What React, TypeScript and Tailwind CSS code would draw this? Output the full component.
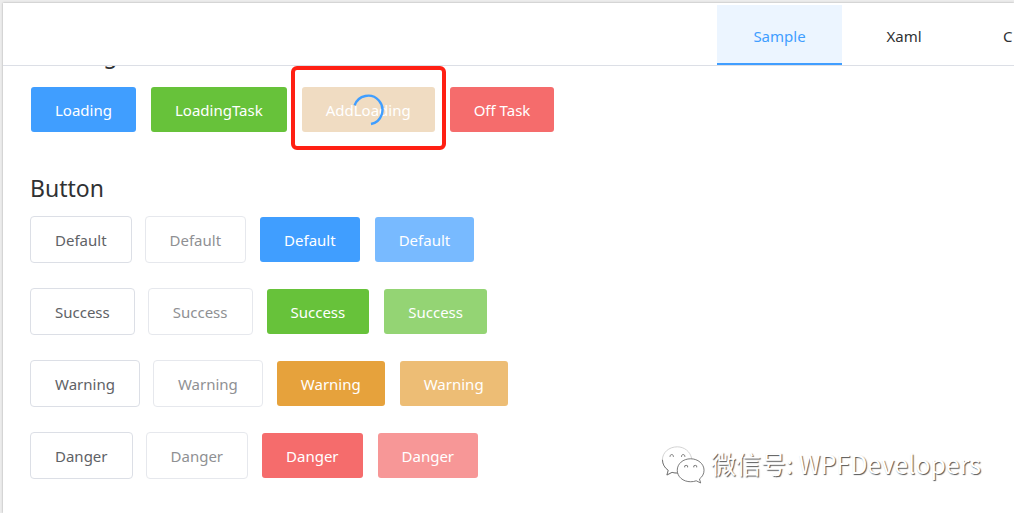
import clsx from "clsx";

type Tone = "primary" | "success" | "warning" | "danger";

const solid: Record<Tone, string> = {
    primary: "bg-[#409eff]",
    success: "bg-[#67c23a]",
    warning: "bg-[#e6a23c]",
    danger: "bg-[#f56c6c]",
};

const rows: { label: string; tone: Tone }[] = [
    { label: "Default", tone: "primary" },
    { label: "Success", tone: "success" },
    { label: "Warning", tone: "warning" },
    { label: "Danger", tone: "danger" },
];

function Button({ label, tone, disabled }: { label: string; tone?: Tone; disabled?: boolean }) {
    return (
        <button
            type="button"
            disabled={disabled}
            className={clsx(
                "h-[47px] rounded border px-6 text-[15px] leading-5 whitespace-nowrap",
                tone ? ["border-transparent bg-clip-padding text-white", solid[tone]] : "border-[#dcdfe6] bg-white text-[#606266]",
                disabled && "opacity-70"
            )}
        >
            {label}
        </button>
    );
}

function LoadingButton({ label }: { label: string }) {
    return (
        <div className="relative">
            <button
                type="button"
                disabled
                className="h-[47px] rounded border border-transparent bg-[#f0dcc2] bg-clip-padding px-6 text-[15px] leading-5 whitespace-nowrap text-white"
            >
                {label}
            </button>
            <svg className="absolute inset-0 m-auto size-8" viewBox="0 0 32 32" fill="none" stroke="#409eff" strokeWidth="2.4">
                <path d="M2.600 11.400A14.300 14.300 0 1 1 19 30" />
            </svg>
            <div className="pointer-events-none absolute -inset-x-[10px] -top-5 -bottom-[17px] rounded-md border-4 border-[#ff2013]" />
        </div>
    );
}

function WeChatLogo() {
    return (
        <svg className="h-10 w-11" viewBox="0 0 46 40" fill="#fff" stroke="#666" strokeWidth="0.9" strokeLinejoin="round">
            <path
                d="M17 1C8.300 1 1.500 7 1.500 14.500c0 4.500 2.300 8.500 6 11L6.200 30.500l5.300-2.800c2 .6 4 .8 6.500.7L32 13C30.500 6 24.500 1 17 1Z"
                stroke="#ccc"
            />
            <path d="M1.500 14.500c0 4.500 2.300 8.500 6 11L6.200 30.500l5.300-2.800c2 .6 4 .8 6.500.7" fill="none" />
            <path d="M31 13.500c-8 0-14 5.200-14 12s6 12 14 12c2.200 0 4-.3 5.800-1l4.700 2.300-1.300-4.200c3-2.200 4.800-5.400 4.800-9.100 0-6.800-6.500-12-14-12Z" />
            <path d="M9.500 11.500a1.800 1.800 0 1 1 3.400 0M21.500 11.500a1.800 1.800 0 1 1 3.400 0M24.800 22.500a1.600 1.600 0 1 1 3 0M34.300 22.500a1.600 1.600 0 1 1 3 0" fill="none" />
        </svg>
    );
}

export default function App() {
    return (
        <div className="flex h-screen flex-col overflow-hidden bg-[#ececec] pt-[3px] pl-[3px] font-['Noto_Sans',sans-serif]">
            <div className="flex min-h-0 flex-1 flex-col bg-white shadow-[0_0_2px_rgba(0,0,0,0.3)]">
                <header className="flex h-[63px] shrink-0 border-b border-[#dcdfe6] pt-0.5">
                    <nav className="ml-auto flex text-[15px] leading-5 text-[#303133]">
                        <a href="#sample" className="flex w-[125px] items-center justify-center border-b-2 border-[#409eff] bg-[#ecf5ff] pt-1 text-[#409eff]">
                            Sample
                        </a>
                        <a href="#xaml" className="flex w-[124px] items-center justify-center pt-0.5">
                            Xaml
                        </a>
                        <a href="#code" className="flex w-12 items-center overflow-hidden pt-0.5 pl-[37px]">
                            C
                        </a>
                    </nav>
                </header>

                <main className="min-h-0 flex-1 overflow-hidden px-[27px] text-[#303133]">
                    {/* scrolled part way under the header */}
                    <section className="-mt-7">
                        <h2 className="text-[23px] leading-8">Loading</h2>
                        <div className="mt-4 flex gap-[13px]">
                            <Button label="Loading" tone="primary" />
                            <Button label="LoadingTask" tone="success" />
                            <LoadingButton label="AddLoading" />
                            <Button label="Off Task" tone="danger" />
                        </div>
                    </section>

                    <section className="mt-[39px]">
                        <h2 className="text-[23px] leading-8">Button</h2>
                        <div className="mt-3 flex flex-col gap-[25px]">
                            {rows.map(({ label, tone }) => (
                                <div key={label} className="flex gap-[13px]">
                                    <Button label={label} />
                                    <Button label={label} disabled />
                                    <Button label={label} tone={tone} />
                                    <Button label={label} tone={tone} disabled />
                                </div>
                            ))}
                        </div>
                    </section>
                </main>
            </div>

            <div className="absolute right-[33px] bottom-7 flex items-center gap-1.5">
                <WeChatLogo />
                <span className="pb-1 font-['Noto_Sans_CJK_SC',sans-serif] text-[25px] leading-9 text-white [text-shadow:1px_1px_1px_#555]">
                    微信号: WPFDevelopers
                </span>
            </div>
        </div>
    );
}
